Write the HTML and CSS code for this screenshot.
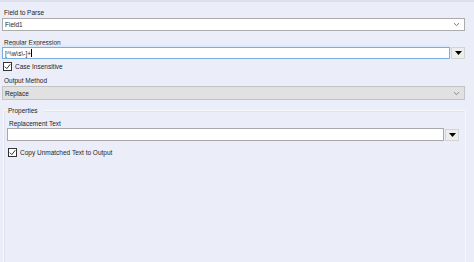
FILE: index.html
```html
<!DOCTYPE html>
<html>
<head>
<meta charset="utf-8">
<link rel="stylesheet" href="styles.css">
</head>
<body>
<div class="strip"></div>
<div class="panel">
  <div class="label l1">Field to Parse</div>
  <div class="combo">
    <span class="value">Field1</span>
    <svg class="chev" width="7" height="5" viewBox="0 0 7 5"><path d="M1 1.2 L3.5 3.6 L6 1.2" fill="none" stroke="#7a7a7a" stroke-width="1"/></svg>
  </div>

  <div class="label l2">Regular Expression</div>
  <div class="inrow">
    <div class="textbox focus"><span class="value">[^\w\s\-]+</span><span class="caret"></span></div>
    <div class="btn"><svg width="7" height="4" viewBox="0 0 7 4"><path d="M0 0 H7 L3.5 4 Z" fill="#000"/></svg></div>
  </div>

  <div class="check c1">
    <span class="box"><svg width="7" height="7" viewBox="0 0 7 7"><path d="M0.8 3.6 L2.8 5.6 L6.3 1.2" fill="none" stroke="#333" stroke-width="1"/></svg></span>
    <span class="ctext">Case Insensitive</span>
  </div>

  <div class="label l3">Output Method</div>
  <div class="combo disabled">
    <span class="value">Replace</span>
    <svg class="chev" width="7" height="5" viewBox="0 0 7 5"><path d="M1 1.2 L3.5 3.6 L6 1.2" fill="none" stroke="#8a8a8a" stroke-width="1"/></svg>
  </div>

  <div class="group">
    <div class="legend">Properties</div>
    <div class="label l4">Replacement Text</div>
    <div class="inrow inner">
      <div class="textbox"></div>
      <div class="btn"><svg width="7" height="4" viewBox="0 0 7 4"><path d="M0 0 H7 L3.5 4 Z" fill="#000"/></svg></div>
    </div>
    <div class="check c2">
      <span class="box"><svg width="7" height="7" viewBox="0 0 7 7"><path d="M0.8 3.6 L2.8 5.6 L6.3 1.2" fill="none" stroke="#333" stroke-width="1"/></svg></span>
      <span class="ctext">Copy Unmatched Text to Output</span>
    </div>
  </div>
</div>
</body>
</html>
```

FILE: styles.css
```css
html, body {
  margin: 0;
  padding: 0;
  height: 262px;
  overflow: hidden;
}
body {
  background: #ebeef9;
  font-family: "Liberation Sans", Arial, sans-serif;
  font-size: 6.5px;
  color: #1e1e1e;
}
.strip {
  height: 2px;
  background: #dde1ec;
}
.panel {
  padding: 0 9px 0 2px;
}
.label {
  line-height: 8px;
  height: 8px;
  padding-left: 2px;
  color: #222;
}
.l1 { margin-top: 7px; }
.l2 { margin-top: 8px; }
.l3 { margin-top: 6px; }
.combo {
  margin-top: 1px;
  height: 11px;
  border: 1px solid #ababab;
  background: #fff;
  display: flex;
  align-items: center;
  justify-content: space-between;
  padding: 0 4px 0 2px;
}
.combo.disabled {
  background: #e1e1e1;
  border-color: #c3c3c3;
  height: 12px;
}
.value {
  line-height: 11px;
}
.chev {
  display: block;
}
.inrow {
  display: flex;
  align-items: center;
  gap: 1px;
}
.inrow .textbox {
  flex: 1;
  height: 10px;
  border: 1px solid #a8a8a8;
  background: #fff;
  display: flex;
  align-items: center;
  padding-left: 2px;
}
.textbox.focus {
  border-color: #7aaee0;
  box-shadow: 0 -2px 2px #d6e9fb;
}
.caret {
  width: 1px;
  height: 8px;
  background: #000;
  margin-left: 0.5px;
}
.btn {
  width: 12px;
  height: 10px;
  border: 1px solid #d4d4d4;
  background: #ededed;
  display: flex;
  align-items: center;
  justify-content: center;
}
.btn svg { display: block; }
.check {
  display: flex;
  align-items: center;
  height: 9px;
}
.c1 { margin-top: 3px; padding-left: 1px; }
.box {
  width: 7px;
  height: 7px;
  border: 1px solid #333;
  background: #fff;
  display: flex;
  align-items: center;
  justify-content: center;
}
.box svg { display: block; }
.ctext {
  margin-left: 3px;
  line-height: 9px;
}
.group {
  margin-top: 10px;
  margin-left: 1px;
  margin-right: -1px;
  height: 152px;
  border: 1px solid #f7f8fc;
  border-bottom-color: #f7f8fc;
  box-shadow: inset 1px 1px 0 #dfe3ee;
  padding: 0 6px 0 3px;
}
.legend {
  margin-top: -4px;
  line-height: 8px;
  height: 8px;
  padding-left: 1px;
  width: 36px;
  background: #ebeef9;
  margin-left: 0;
}
.l4 {
  margin-top: 5px;
  padding-left: 2px;
}
.inner .textbox {
  height: 11px;
}
.inner {
  margin-top: 0;
}
.c2 { margin-top: 7px; padding-left: 1px; }
```
